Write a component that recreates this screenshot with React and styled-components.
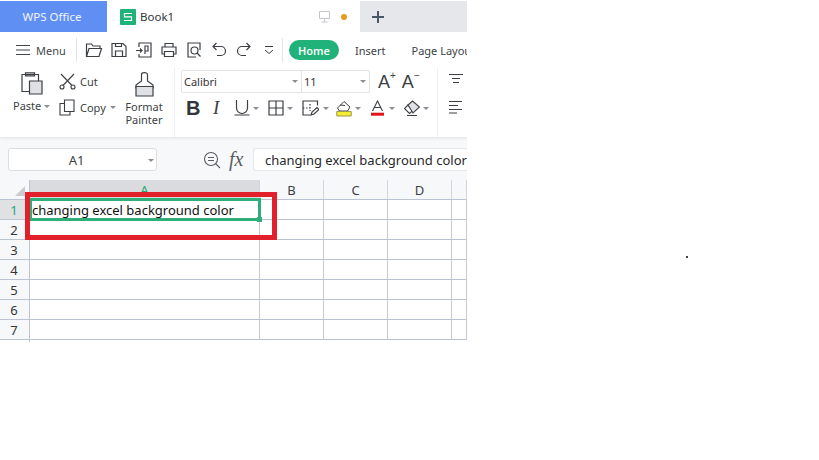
import styled, { createGlobalStyle } from 'styled-components'

const Global = createGlobalStyle`
  html, body { margin: 0; padding: 0; background: #fff; }
  body { font-family: "Noto Sans", "Open Sans", sans-serif; color: #333; }
`;

const Line = ({ children, w = 22, h = 22 }) => (
  <svg width={w} height={h} viewBox={`0 0 ${w} ${h}`} fill="none" stroke="#3c3f44" strokeWidth="1.2">{children}</svg>
);

const Caret = styled.span`
  flex: none;
  width: 0;
  height: 0;
  margin-left: ${p => p.$gap ?? 3}px;
  border-left: 3px solid transparent;
  border-right: 3px solid transparent;
  border-top: 3px solid #8a8d92;
`;

const columns = [
  { name: 'A', width: 230 },
  { name: 'B', width: 64 },
  { name: 'C', width: 64 },
  { name: 'D', width: 64 },
  { name: '', width: 15 },
];
const rows = [1, 2, 3, 4, 5, 6, 7];

export default function App() {
  return (
    <Page>
      <Global />
      <Office>
        <TabBar>
          <WpsTab>WPS Office</WpsTab>
          <BookTab>
            <BookIcon>
              <svg width="16" height="16" viewBox="0 0 16 16" fill="none" stroke="#fff" strokeWidth="1.2">
                <path d="M12 4.500H4.500v3.300h7v3.700H4" />
              </svg>
            </BookIcon>
            Book1
          </BookTab>
          <TabStatus>
            <svg width="13" height="13" viewBox="0 0 13 13" fill="none" stroke="#c3c6ca" strokeWidth="1">
              <path d="M1.500 1.500h10v7h-10zM6.500 8.500v3.500M3.500 12h6" />
            </svg>
            <Dot />
          </TabStatus>
          <NewTab>
            <svg width="14" height="14" viewBox="0 0 14 14" stroke="#4a5568" strokeWidth="2">
              <path d="M7 1v12M1 7h12" />
            </svg>
          </NewTab>
        </TabBar>

        <MenuBar>
          <MenuButton>
            <svg width="14" height="10" viewBox="0 0 14 10" stroke="#44474c" strokeWidth="1">
              <path d="M0 .5h14M0 5h14M0 9.500h14" />
            </svg>
            Menu
          </MenuButton>
          <Divider />
          <QuickIcons>
            <Line w={18} h={18}><path d="M1.500 15.500V3h5l1.500 2h7v2.500M1.500 15.500h12.500l2.500-8H4z" /></Line>
            <Line w={18} h={18}><path d="M2 2.500h11l3 3v10H2zM5.500 15.500V10h7v5.500M5.500 2.500v3h6v-3" /></Line>
            <Line w={18} h={18}><path d="M4 6V2h12v14H4v-3M1 9.500h6M5 7.500l2 2-2 2M13 5h-3v5h3zM10 10v3" /></Line>
            <Line w={18} h={18}><path d="M5 6V2.500h8V6M4.500 13H2V6h14v7h-2.500M4.500 10.500h9v5h-9z" /></Line>
            <Line w={18} h={18}><path d="M15 9V2H3v14h8" /><circle cx="9.500" cy="9.500" r="3.500" /><path d="M12 12l3.500 3.500" /></Line>
            <Line w={18} h={18}><path d="M6.500 2L3 5.500 6.500 9M3 5.500h8a4.500 4.500 0 0 1 0 9H7" /></Line>
            <Line w={18} h={18}><path d="M11.500 2L15 5.500 11.500 9M15 5.500H7a4.500 4.500 0 0 0 0 9h4" /></Line>
            <Line w={12} h={18}><path d="M2 5.500h8M2 9l4 3.500L10 9" strokeWidth="1" /></Line>
          </QuickIcons>
          <Divider />
          <HomePill>Home</HomePill>
          <MenuItem>Insert</MenuItem>
          <MenuItem>Page Layout</MenuItem>
        </MenuBar>

        <Ribbon>
          <ClipGroup>
            <PasteCol>
              <svg width="22" height="23" viewBox="0 0 22 23" fill="none" stroke="#3c3f44" strokeWidth="1.2">
                <path d="M8 19.500H1V2.500h16.500V9M4.500 .8h9v3h-9z" />
                <path d="M8.500 9h12.500v13H8.500z" fill="#dfe1e4" />
              </svg>
              <Label>Paste<Caret /></Label>
            </PasteCol>
            <CutCopyCol>
              <SmallRow>
                <svg width="17" height="17" viewBox="0 0 17 17" fill="none" stroke="#3c3f44" strokeWidth="1.1">
                  <path d="M2 1l11 11.500M15 1L4 12.500" />
                  <circle cx="3" cy="14" r="2" />
                  <circle cx="14" cy="14" r="2" />
                </svg>
                Cut
              </SmallRow>
              <SmallRow>
                <svg width="17" height="17" viewBox="0 0 17 17" fill="none" stroke="#3c3f44" strokeWidth="1.1">
                  <path d="M5.500 1h9.500v11.500H5.500zM5.500 4.500H1v11.500h10v-3.500" />
                </svg>
                Copy<Caret $gap={0} />
              </SmallRow>
            </CutCopyCol>
            <PainterCol>
              <svg width="19" height="25" viewBox="0 0 19 25" fill="none" stroke="#3c3f44" strokeWidth="1.2">
                <path d="M6.500 9V2.500a3 1.800 0 0 1 6 0V9l5.500 4v3H1v-3z" />
                <path d="M1 14.500h17V24H1z" fill="#dfe1e4" />
              </svg>
              <PainterText>Format<br />Painter</PainterText>
            </PainterCol>
          </ClipGroup>

          <FontGroup>
            <FontRow>
              <FontSelect>
                <FontName>Calibri<Caret /></FontName>
                <FontSize>11<Caret /></FontSize>
              </FontSelect>
              <SizeIcons>
                <GrowLetter>A<sup>+</sup></GrowLetter>
                <GrowLetter>A<sup>−</sup></GrowLetter>
              </SizeIcons>
            </FontRow>
            <FormatRow>
              <Bold>B</Bold>
              <Italic>I</Italic>
              <FormatItem>
                <Line w={16} h={16}><path d="M.5 15h15M2.500 0v8a5.500 5.500 0 0 0 11 0V0" /></Line>
                <Caret />
              </FormatItem>
              <FormatItem>
                <Line w={16} h={16}><path d="M1 1h14v14H1zM8 1v14M1 8h14" /></Line>
                <Caret />
              </FormatItem>
              <FormatItem>
                <Line w={17} h={16}>
                  <path d="M15.500 5.500V1H1v14h7" />
                  <path d="M1 8h7M8 4v7" strokeDasharray="1.500 1.500" />
                  <path d="M9 15l1-3 5-4.500 2 2-5 4.500z" />
                </Line>
                <Caret $gap={4} />
              </FormatItem>
              <FormatItem>
                <svg width="16" height="17" viewBox="0 0 16 17" fill="none" stroke="#3c3f44" strokeWidth="1">
                  <path d="M1.500 8l6.500-6.500 6 5.500-2.500 4h-8z" />
                  <path d="M4 5l5 .5" />
                  <path d="M.8 11.500h14.400v4.500H.8z" fill="#f5ee2e" stroke="#9b9a4e" />
                </svg>
                <Caret />
              </FormatItem>
              <FormatItem>
                <svg width="15" height="16" viewBox="0 0 15 16" fill="none" stroke="#3c3f44" strokeWidth="1.100">
                  <path d="M2.500 11L7.500 1l5 10M4.500 7.500h6" />
                  <path d="M1 14.200h13" stroke="#e0141b" strokeWidth="3" />
                </svg>
                <Caret $gap={4} />
              </FormatItem>
              <FormatItem>
                <svg width="16" height="16" viewBox="0 0 16 16" fill="none" stroke="#3c3f44" strokeWidth="1.100">
                  <path d="M4 5l-3.500 3.500 5 5 3.500-3z" />
                  <path d="M4 5l4.500-4 7 6-6.500 6z" fill="#dfe1e4" />
                  <path d="M3 15.500h10" />
                </svg>
                <Caret />
              </FormatItem>
            </FormatRow>
          </FontGroup>

          <AlignGroup>
            <svg width="16" height="12" viewBox="0 0 16 12" stroke="#3c3f44" strokeWidth="1">
              <path d="M1 1.500h14M4 5.500h8M5 9.500h6" />
            </svg>
            <svg width="16" height="14" viewBox="0 0 16 14" stroke="#3c3f44" strokeWidth="1">
              <path d="M1 1.500h13M1 5.500h9M1 9.500h13M1 13h8" />
            </svg>
          </AlignGroup>
        </Ribbon>

        <FormulaBar>
          <NameBox>A1<NameCaret /></NameBox>
          <FormulaIcons>
            <svg width="18" height="18" viewBox="0 0 18 18" fill="none" stroke="#5a5d62" strokeWidth="1.100">
              <circle cx="8" cy="8" r="6.500" />
              <path d="M12.500 12.500L17 17M5 6.500h6M5 9.500h6" />
            </svg>
            <FxLabel>fx</FxLabel>
          </FormulaIcons>
          <FormulaInput>changing excel background color</FormulaInput>
        </FormulaBar>

        <Sheet>
          <HeaderRow>
            <Corner><CornerMark /></Corner>
            {columns.map((c, i) => (
              <ColHead key={i} $w={c.width} $active={c.name === 'A'}>{c.name}</ColHead>
            ))}
          </HeaderRow>
          {rows.map(r => (
            <GridRow key={r}>
              <RowHead $active={r === 1}>{r}</RowHead>
              {columns.map((c, i) => (
                <Cell key={i} $w={c.width}>
                  {r === 1 && i === 0 && <CellText>changing excel background color</CellText>}
                </Cell>
              ))}
            </GridRow>
          ))}
          <SheetEnd />
          <Selection><Handle /></Selection>
          <RedMark />
        </Sheet>
      </Office>
      <Speck />
    </Page>
  );
}

const Page = styled.div`
  position: relative;
  width: 819px;
  height: 460px;
  overflow: hidden;
  background: #fff;
`;

const Office = styled.div`
  width: 467px;
  display: flex;
  flex-direction: column;
  overflow: hidden;
`;

const TabBar = styled.div`
  height: 32px;
  box-sizing: border-box;
  padding-top: 1px;
  display: flex;
  background: #fff;
`;

const WpsTab = styled.div`
  width: 107px;
  box-sizing: border-box;
  padding-right: 3px;
  display: flex;
  align-items: center;
  justify-content: center;
  background: #5f8ff3;
  color: #f2f5fd;
  font-size: 11.500px;
`;

const BookTab = styled.div`
  width: 184px;
  box-sizing: border-box;
  padding-left: 13px;
  display: flex;
  align-items: center;
  gap: 4px;
  font-size: 11.500px;
  color: #33363a;
`;

const BookIcon = styled.span`
  width: 16px;
  height: 16px;
  display: flex;
  background: #21b27a;
  border-radius: 1px;
`;

const TabStatus = styled.div`
  width: 69px;
  padding-left: 27px;
  box-sizing: border-box;
  display: flex;
  align-items: center;
  gap: 10px;
`;

const Dot = styled.span`
  width: 6px;
  height: 6px;
  border-radius: 50%;
  background: #e79a1e;
`;

const NewTab = styled.div`
  flex: 1;
  padding-left: 11px;
  display: flex;
  align-items: center;
  background: #e5e7eb;
`;

const MenuBar = styled.div`
  height: 36px;
  padding-left: 16px;
  display: flex;
  align-items: center;
  font-size: 11px;
  white-space: nowrap;
  background: #fff;
`;

const MenuButton = styled.div`
  flex: none;
  display: flex;
  align-items: center;
  gap: 6px;
  width: 60px;
  color: #44474c;
`;

const Divider = styled.span`
  flex: none;
  width: 1px;
  height: 24px;
  background: #e4e5e7;
`;

const QuickIcons = styled.div`
  flex: none;
  width: 205px;
  padding-left: 8px;
  box-sizing: border-box;
  display: flex;
  align-items: center;
  gap: 7px;
  svg:last-child { margin-left: 3px; }
`;

const HomePill = styled.div`
  flex: none;
  margin-left: 6px;
  width: 50px;
  height: 20px;
  display: flex;
  align-items: center;
  justify-content: center;
  border-radius: 10px;
  background: #21b27a;
  color: #f4fbf8;
  font-weight: 600;
`;

const MenuItem = styled.div`
  flex: none;
  margin-left: 16px;
  color: #3c3f44;
  &:last-child { margin-left: 26px; }
`;

const Ribbon = styled.div`
  height: 69px;
  display: flex;
  background: #fff;
  box-shadow: 0 2px 2px rgba(0, 0, 0, 0.06);
  position: relative;
  white-space: nowrap;
`;

const ClipGroup = styled.div`
  flex: none;
  width: 175px;
  box-sizing: border-box;
  padding: 4px 0 0 13px;
  display: flex;
  border-right: 1px solid #eeeff1;
  font-size: 11px;
  color: #3c3f44;
`;

const PasteCol = styled.div`
  width: 46px;
  display: flex;
  flex-direction: column;
  align-items: flex-start;
  gap: 4px;
  svg { margin-left: 8px; }
`;

const Label = styled.div`
  display: flex;
  align-items: center;
  line-height: 14px;
`;

const CutCopyCol = styled.div`
  width: 65px;
  display: flex;
  flex-direction: column;
  gap: 9px;
  padding-top: 1px;
`;

const SmallRow = styled.div`
  height: 17px;
  display: flex;
  align-items: center;
  gap: 4px;
`;

const PainterCol = styled.div`
  display: flex;
  flex-direction: column;
  align-items: center;
  width: 40px;
  gap: 3px;
`;

const PainterText = styled.div`
  text-align: center;
  line-height: 13px;
`;

const FontGroup = styled.div`
  flex: none;
  width: 263px;
  box-sizing: border-box;
  padding: 2px 0 0 6px;
  border-right: 1px solid #eeeff1;
`;

const FontRow = styled.div`
  display: flex;
  align-items: center;
`;

const FontSelect = styled.div`
  width: 189px;
  height: 23px;
  flex: none;
  display: flex;
  box-sizing: border-box;
  border: 1px solid #e2e3e6;
  border-radius: 2px;
  font-size: 11px;
`;

const FontName = styled.div`
  width: 120px;
  padding: 0 3px 0 2px;
  box-sizing: border-box;
  display: flex;
  align-items: center;
  justify-content: space-between;
  border-right: 1px solid #e2e3e6;
`;

const FontSize = styled(FontName)`
  flex: 1;
  width: auto;
  border-right: 0;
`;

const SizeIcons = styled.div`
  display: flex;
  margin-left: 8px;
  gap: 6px;
`;

const GrowLetter = styled.span`
  display: flex;
  font-family: "Liberation Sans", sans-serif;
  font-size: 18px;
  line-height: 20px;
  color: #3c3f44;
  sup { font-size: 10px; line-height: 10px; margin-top: -1px; }
`;

const FormatRow = styled.div`
  margin-top: 5px;
  padding-left: 5px;
  display: flex;
  align-items: center;
`;

const Bold = styled.span`
  flex: none;
  width: 27px;
  font-family: "Liberation Sans", sans-serif;
  font-weight: 700;
  font-size: 20px;
  line-height: 20px;
  color: #33363a;
`;

const Italic = styled.span`
  flex: none;
  width: 21px;
  font-family: "Liberation Serif", serif;
  font-style: italic;
  font-size: 19px;
  line-height: 20px;
  color: #3c3f44;
`;

const FormatItem = styled.div`
  flex: none;
  width: 34px;
  display: flex;
  align-items: center;
`;

const AlignGroup = styled.div`
  padding: 5px 0 0 10px;
  display: flex;
  flex-direction: column;
  gap: 15px;
`;

const FormulaBar = styled.div`
  height: 43px;
  box-sizing: border-box;
  padding: 11px 0 9px 8px;
  display: flex;
  background: #f7f8f9;
`;

const NameBox = styled.div`
  position: relative;
  width: 149px;
  flex: none;
  box-sizing: border-box;
  padding-right: 12px;
  display: flex;
  align-items: center;
  justify-content: center;
  background: #fff;
  border: 1px solid #dcdee1;
  border-radius: 3px;
  font-size: 13px;
  color: #3c3f44;
`;

const NameCaret = styled(Caret)`
  position: absolute;
  right: 2px;
  top: 10px;
`;

const FormulaIcons = styled.div`
  width: 96px;
  flex: none;
  padding-left: 46px;
  box-sizing: border-box;
  display: flex;
  align-items: center;
  gap: 8px;
`;

const FxLabel = styled.span`
  font-family: "Liberation Serif", serif;
  font-style: italic;
  font-size: 20px;
  color: #5a5d62;
`;

const FormulaInput = styled.div`
  flex: 1;
  min-width: 0;
  padding-left: 11px;
  display: flex;
  align-items: center;
  white-space: nowrap;
  overflow: hidden;
  background: #fff;
  border: 1px solid #e6e7e9;
  border-right: 0;
  border-radius: 3px 0 0 3px;
  font-size: 13px;
  color: #26282b;
`;

const Sheet = styled.div`
  position: relative;
  background: #fff;
`;

const HeaderRow = styled.div`
  height: 19px;
  display: flex;
  background: #f7f8f9;
  border-bottom: 1px solid #bcc3d2;
`;

const Corner = styled.div`
  position: relative;
  width: 30px;
  flex: none;
  box-sizing: border-box;
  border-right: 1px solid #bcc3d2;
`;

const CornerMark = styled.span`
  position: absolute;
  right: 4px;
  bottom: 3px;
  border-left: 10px solid transparent;
  border-bottom: 10px solid #c9ccd0;
`;

const ColHead = styled.div`
  width: ${p => p.$w}px;
  flex: none;
  box-sizing: border-box;
  display: flex;
  justify-content: center;
  align-items: center;
  font-size: 13px;
  color: ${p => (p.$active ? '#21a872' : '#3c3f44')};
  background: ${p => (p.$active ? '#d9dbdf' : 'transparent')};
  border-right: 1px solid #d3d6dd;
`;

const GridRow = styled.div`
  height: 20px;
  box-sizing: border-box;
  display: flex;
  border-bottom: 1px solid #bcc3d2;
`;

const RowHead = styled.div`
  width: 30px;
  flex: none;
  box-sizing: border-box;
  padding-right: 1px;
  display: flex;
  justify-content: center;
  align-items: center;
  font-size: 13px;
  color: ${p => (p.$active ? '#21a872' : '#33363a')};
  background: ${p => (p.$active ? '#dfe1e3' : '#f7f8f9')};
  border-right: 1px solid #bcc3d2;
`;

const Cell = styled.div`
  width: ${p => p.$w}px;
  flex: none;
  box-sizing: border-box;
  display: flex;
  align-items: center;
  border-right: 1px solid #c6cad3;
`;

const CellText = styled.span`
  padding-left: 2px;
  white-space: nowrap;
  font-size: 13px;
  color: #111;
`;

const SheetEnd = styled.div`
  height: 2px;
  margin-left: 29px;
  width: 1px;
  background: #bcc3d2;
`;

const Selection = styled.div`
  position: absolute;
  left: 30px;
  top: 18px;
  width: 231px;
  height: 23px;
  box-sizing: border-box;
  border: solid #2fae7a;
  border-width: 3px 3px 3px 2px;
`;

const Handle = styled.span`
  position: absolute;
  right: -4px;
  bottom: -4px;
  width: 5px;
  height: 5px;
  background: #2fae7a;
`;

const RedMark = styled.div`
  position: absolute;
  left: 25px;
  top: 12px;
  width: 252px;
  height: 48px;
  box-sizing: border-box;
  border: 5px solid #e2202c;
`;

const Speck = styled.span`
  position: absolute;
  left: 686px;
  top: 256px;
  width: 2px;
  height: 2px;
  background: #444;
`;
